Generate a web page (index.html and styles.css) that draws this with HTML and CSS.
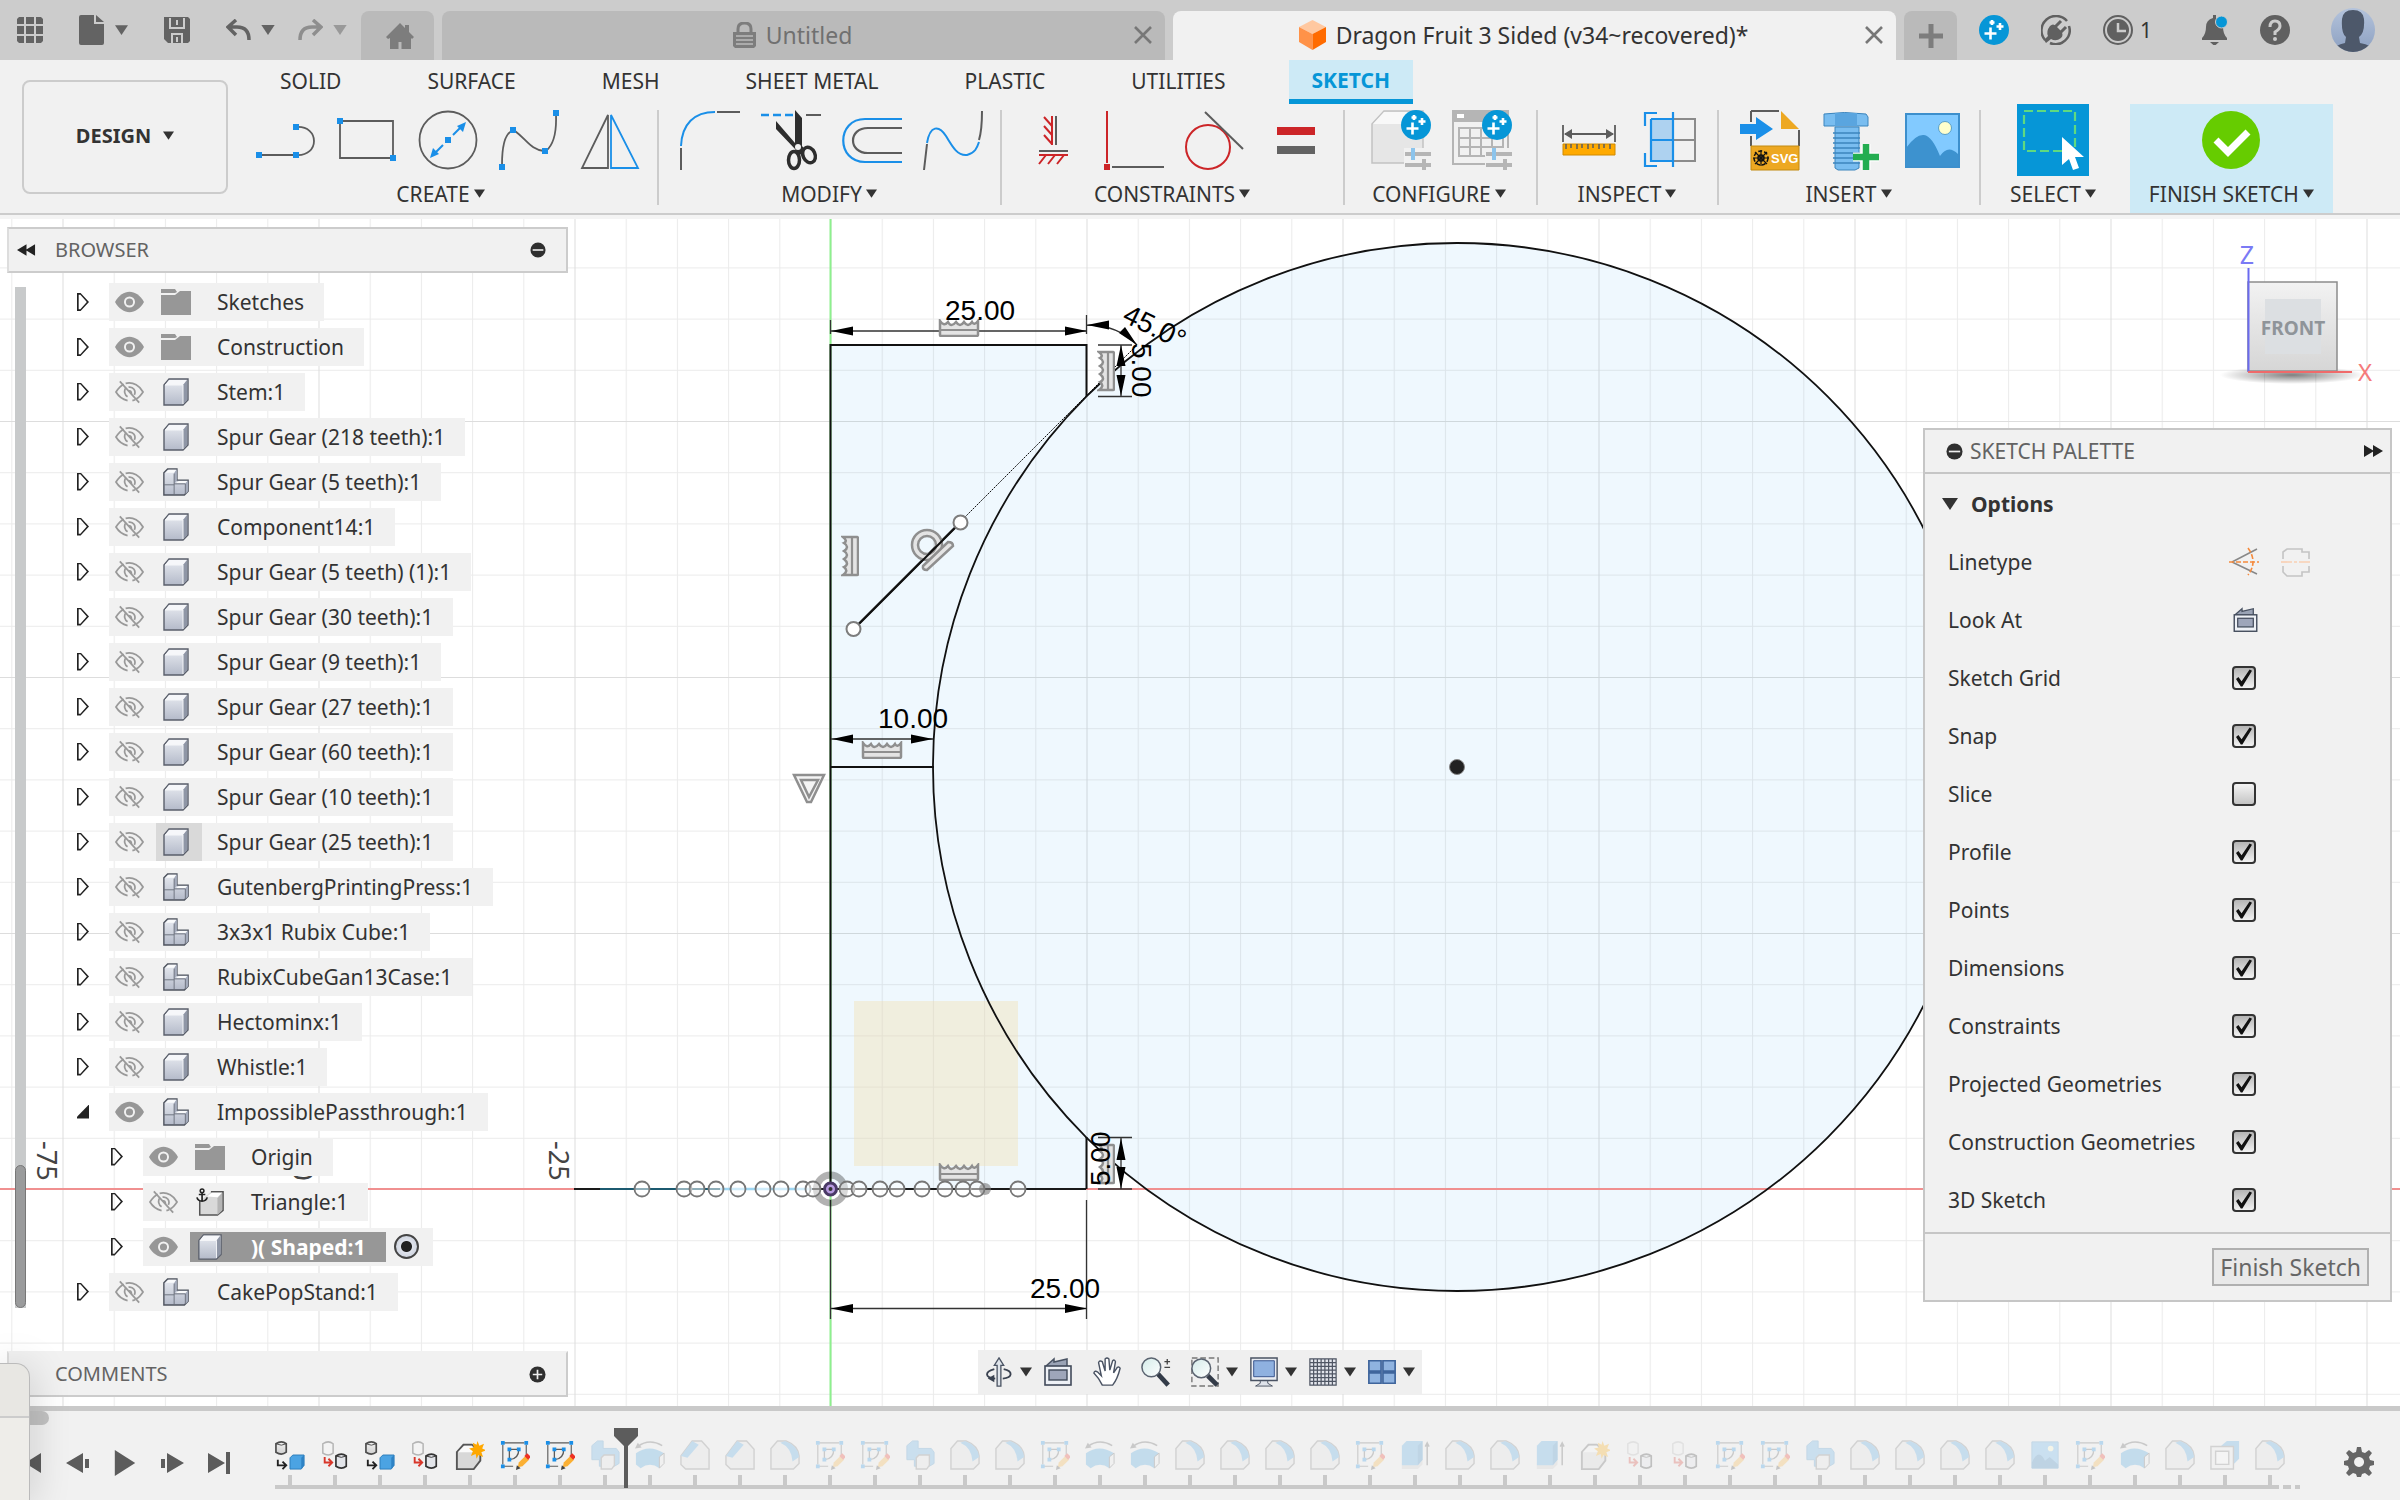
FILE: index.html
```html
<!DOCTYPE html>
<html lang="en">
<head>
<meta charset="utf-8">
<title>Dragon Fruit 3 Sided (v34~recovered)*</title>
<link rel="stylesheet" href="styles.css">
</head>
<body>
<svg class="defs" aria-hidden="true">
  <defs>
    <linearGradient id="g-body" x1="0" y1="0" x2="0" y2="1"><stop offset="0" stop-color="#e9ecf2"/><stop offset="1" stop-color="#b4bac9"/></linearGradient>
    <linearGradient id="g-grey" x1="0" y1="0" x2="0" y2="1"><stop offset="0" stop-color="#f4f4f4"/><stop offset="1" stop-color="#cfcfcf"/></linearGradient>
    <linearGradient id="g-cube" x1="0" y1="0" x2="0" y2="1"><stop offset="0" stop-color="#f2f2f2"/><stop offset="1" stop-color="#d6d6d6"/></linearGradient>
    <linearGradient id="g-lens" x1="0" y1="0" x2="1" y2="1"><stop offset="0" stop-color="#d3ebe9"/><stop offset="1" stop-color="#ffffff"/></linearGradient>
    <linearGradient id="g-face" x1="0" y1="0" x2="0" y2="1"><stop offset="0" stop-color="#b5c4dc"/><stop offset="1" stop-color="#8b9fc0"/></linearGradient>
    <radialGradient id="g-shadow"><stop offset="0" stop-color="#000" stop-opacity=".5"/><stop offset="1" stop-color="#000" stop-opacity="0"/></radialGradient>
  </defs>
  <symbol id="caret" viewBox="0 0 12 9"><path d="M0 0h12L6 9z" fill="currentColor"/></symbol>
  <symbol id="close" viewBox="0 0 18 18"><path d="M1 1l16 16M17 1L1 17" stroke="#777" stroke-width="2.6"/></symbol>
  <symbol id="eye" viewBox="0 0 30 22"><path d="M0 11C8-3 22-3 30 11C22 25 8 25 0 11z" fill="#979797"/><circle cx="15" cy="11" r="4.7" fill="#979797" stroke="#f1f1f1" stroke-width="2"/></symbol>
  <symbol id="eye-off" viewBox="0 0 30 26"><g fill="none" stroke="#999" stroke-width="1.8"><path d="M9 5C5 7 3 10 1 13C4 18 9 21 13 22M11 4C19 2 26 7 29 13C27 16 25 19 22 20M18 22l3-1M11 9C9 12 10 16 13 18M14 8C19 7 22 12 20 16M14 12q3-1 3 3"/><path d="M5 2l20 22"/></g></symbol>
  <symbol id="folder" viewBox="0 0 30 26"><path d="M0 0h14l2 3-2 1H0zM0 6h14l5-4h11v24H0z" fill="#979797"/></symbol>
  <symbol id="body" viewBox="0 0 26 28"><path d="M1 7l5-6h19v21l-5 5H1z" fill="url(#g-body)" stroke="#5a5f6b" stroke-width="1.4"/><path d="M2 7l4-5h18l-4 5z" fill="#f6f7fa"/><path d="M20 7l4-5v20l-4 4z" fill="#8f96a6"/><path d="M2 7h18v19" fill="none" stroke="#f4f5f8" stroke-width="1"/></symbol>
  <symbol id="assembly" viewBox="0 0 28 30"><path d="M1 5l4-4h10v12h12v12l-4 4H1z" fill="url(#g-body)" stroke="#4f545f" stroke-width="1.5"/><path d="M12 5l3-4v12l-3 4zM24 17l3-4v12l-3 3z" fill="#a4abbb"/><path d="M1 18h11M12 6v22M12 17h12v11" fill="none" stroke="#6a707c" stroke-width="1"/><path d="M3 5l3-3h8l-2 3zM14 16l3-2h9l-2 2z" fill="#fafbfc"/></symbol>
  <symbol id="anchored" viewBox="0 0 30 30"><path d="M4 14v15h19l6-5V4H16" fill="#d9d9d9" stroke="#555" stroke-width="1.6"/><path d="M12 9l5-4h11l-5 5z" fill="#fff"/><path d="M23 11l5-6v19l-5 5z" fill="#b5b5b5"/><circle cx="6.500" cy="3" r="2" fill="none" stroke="#222" stroke-width="1.6"/><path d="M6.500 5v9M3 7h7M1 10q1 4 5.500 4Q11 14 12 10" fill="none" stroke="#222" stroke-width="1.8"/></symbol>
  <symbol id="minus" viewBox="0 0 18 18"><circle cx="9" cy="9" r="8.500" fill="#2f2f2f"/><path d="M3 9h12" stroke="#eee" stroke-width="1.8"/></symbol>
  <symbol id="plus" viewBox="0 0 18 18"><circle cx="9" cy="9" r="8.500" fill="#2f2f2f"/><path d="M4 9h10M9 4v10" stroke="#eee" stroke-width="1.800"/></symbol>
  <symbol id="rewind" viewBox="0 0 20 12"><path d="M10 0v12L0 6zM19 0v12L9 6z" fill="#222"/></symbol>
  <symbol id="spark" viewBox="0 0 30 30"><circle cx="15" cy="15" r="15" fill="#0696d7"/><path d="M11.500 12.500v12M5.500 18.500h12M21 8v7M17.500 11.500h7M13 5v5M10.500 7.500h5" stroke="#fff" stroke-width="2.600"/></symbol>
  <symbol id="look" viewBox="0 0 28 30"><path d="M2 9L10 2v3l13-3v8" fill="#9aa3b5" stroke="#4a5363" stroke-width="1.5"/><rect x="1" y="9" width="26" height="19" fill="#eef1f6" stroke="#414a5a" stroke-width="1.6"/><rect x="5" y="13" width="18" height="10" fill="#9ea6ba" stroke="#414a5a" stroke-width="1.4"/></symbol>

  <symbol id="t-insert" viewBox="0 0 32 32"><path d="M1 4q6-4 11 0v9q-5 4-11 0z" fill="url(#g-grey)" stroke="#4d4d4d" stroke-width="1.8"/><path d="M1 4q6 3 11 0" fill="none" stroke="#4d4d4d"/><path d="M3 21v6h8M8 23l4 4-4 4" fill="none" stroke="#222" stroke-width="2"/><path d="M16 19l3-3h12v11l-3 4H16z" fill="#4ba3e3" stroke="#2b7cba"/><path d="M28 19l3-3v11l-3 4z" fill="#2f83c5"/></symbol>
  <symbol id="t-derive" viewBox="0 0 32 32"><path d="M3 4q6-4 11 0v10q-5 4-11 0z" fill="#f3f3f3" stroke="#b5b5b5" stroke-width="1.600"/><path d="M5 18v6h7M9 20l4 4-4 4" fill="none" stroke="#d8372a" stroke-width="2"/><path d="M17 17q6-4 11 0v11q-5 4-11 0z" fill="#e3e5ea" stroke="#333" stroke-width="1.800"/><path d="M17 17q6 3 11 0" fill="none" stroke="#333"/></symbol>
  <symbol id="t-new" viewBox="0 0 32 32"><path d="M2 13l7-8h9l9 9v8l-7 9H2z" fill="#d8d8d8" stroke="#565656" stroke-width="2"/><path d="M3 13l7-7h8l6 7z" fill="#fafafa"/><path d="M24 1l2 5 5-2-2 5 4 2-5 2 2 5-5-2-2 4-1-5-5 2 2-5-4-3 5-1-1-5 4 2z" fill="#ffa800"/></symbol>
  <symbol id="t-sketch" viewBox="0 0 32 32"><path d="M4 3h22M3 5v21M28 5v11M4 28h10" fill="none" stroke="#5b5b5b" stroke-width="1.200"/><path d="M10 10h10q0 10-10 11z" fill="none" stroke="#5b5b5b" stroke-width="1.400"/><path d="M1 1h4v4H1zM26 1h4v4h-4zM1 26h4v4H1zM8 8h4v4H8zM18 8h4v4h-4zM8 19h4v4H8z" fill="#1a8fe8"/><path d="M19 29l1-5 7-7 4 4-7 7z" fill="#fbb034"/><path d="M26 17l3-3 4 4-3 3z" fill="#ee3124"/><path d="M17 32l1-5 4 3z" fill="#444"/></symbol>
  <symbol id="t-combine" viewBox="0 0 32 32"><path d="M2 6l6-5h6v8h14l3 4v12l-5 3H10v-7H2z" fill="#5aaee8" stroke="#3c8cc7"/><path d="M12 19l3-3h11v11l-3 4H12z" fill="#e8e8e8" stroke="#777" stroke-width="1.500"/></symbol>
  <symbol id="t-revolve" viewBox="0 0 32 32"><path d="M3 7Q15-2 29 6" fill="none" stroke="#555" stroke-width="1.600"/><path d="M0 9l3-6 4 5z" fill="#555"/><path d="M1 14q14-10 30 0v10l-5 6q-10-7-20 0l-5-4z" fill="#3f9fe0"/><path d="M26 18l5-4v11l-5 5z" fill="#eee" stroke="#555"/></symbol>
  <symbol id="t-chamfer" viewBox="0 0 32 32"><path d="M1 17L13 1h10l8 9v21H6L1 26z" fill="#e4e4e4" stroke="#777" stroke-width="1.500"/><path d="M1 17L13 1l7 4L8 19z" fill="#4ba3e3"/></symbol>
  <symbol id="t-fillet" viewBox="0 0 32 32"><path d="M1 31V9l7-8h9q13 5 14 16v8l-6 6z" fill="#e4e4e4" stroke="#777" stroke-width="1.500"/><path d="M11 3l5-2q14 5 15 17l-7 5Q23 8 11 3z" fill="#4ba3e3"/></symbol>
  <symbol id="t-extrude" viewBox="0 0 32 32"><path d="M2 25v6h17l5-5v-5z" fill="#ccc"/><path d="M2 6l5-5h17v20l-5 6H2z" fill="#4ba3e3"/><path d="M19 6l5-5v20l-5 6z" fill="#2f83c5"/><path d="M29 27V4M27 7l2-4 2 4" stroke="#555" fill="none" stroke-width="1.600"/></symbol>
  <symbol id="t-image" viewBox="0 0 32 32"><path d="M2 2h28v28H2z" fill="#5bb0f0" stroke="#3c8cc7"/><path d="M2 24q7-16 14-2l5-4 9 8v4H2z" fill="#2b7cba"/><circle cx="22" cy="9" r="3" fill="#ffffd0"/></symbol>
  <symbol id="t-shell" viewBox="0 0 32 32"><path d="M12 6l6-5h13v19l-5 5H12z" fill="#4ba3e3"/><path d="M1 7h24v24H1z" fill="#eee" stroke="#777" stroke-width="1.500"/><path d="M6 12h14v14H6z" fill="#fff" stroke="#777" stroke-width="1.500"/></symbol>

  <symbol id="comb" viewBox="0 0 42 18"><path d="M2 10V2q4 6 8 1q3 6 8 0q4 6 8 0q4 6 8 0q2 4 6-1v14q0 1-2 1H3q-1 0-1-1z" fill="#e4e4e4" stroke="#8f8f8f" stroke-width="2.500"/><path d="M2 11h38" stroke="#8f8f8f" stroke-width="2.200"/></symbol>
</svg>

<header class="topbar">
  <div class="quick">
    <button class="icon-btn" aria-label="Data panel"><svg width="26" height="26" viewBox="0 0 26 26"><path fill="#636363" d="M2 0h5v7H0V2zM9 0h8v7H9zM19 0h5l2 2v5h-7zM0 9h7v8H0zM9 9h8v8H9zM19 9h7v8h-7zM0 19h7v7H2l-2-2zM9 19h8v7H9zM19 19h7v5l-2 2h-5z"/></svg></button>
    <button class="icon-btn" aria-label="File"><svg width="26" height="30" viewBox="0 0 26 30"><path fill="#636363" d="M2 0h13v9h10v19q0 2-2 2H2q-2 0-2-2V2Q0 0 2 0zM17 0l8 7h-8z"/></svg><svg class="c-dark" width="13" height="10"><use href="#caret"/></svg></button>
    <button class="icon-btn" aria-label="Save"><svg width="26" height="26" viewBox="0 0 26 26"><path fill="#636363" d="M0 0h24l2 2v22l-2 2H4l-4-4z"/><path d="M6 1v10h14V1M8 26V17h10v9M13 3v5M13 20v5" fill="none" stroke="#ccc" stroke-width="2"/></svg></button>
    <div class="history">
      <button class="icon-btn" aria-label="Undo"><svg width="25" height="22" viewBox="0 0 25 22"><path d="M10 1L2 8l8 8M2 8h9q12 0 12 13" fill="none" stroke="#636363" stroke-width="3.500"/></svg><svg class="c-dark" width="14" height="10"><use href="#caret"/></svg></button>
      <button class="icon-btn" aria-label="Redo"><svg width="25" height="22" viewBox="0 0 25 22"><path d="M15 1l8 7-8 8M23 8h-9Q2 8 2 21" fill="none" stroke="#8e8e8e" stroke-width="3.500"/></svg><svg class="c-mid" width="14" height="10"><use href="#caret"/></svg></button>
    </div>
  </div>
  <nav class="docs" aria-label="Documents">
    <button class="doc doc-small" aria-label="Home"><svg width="28" height="26" viewBox="0 0 28 26"><path d="M14 0l5 5V2h4v7l5 5-2 2-1-1v11h-8v-9h-6v9H4V15l-2 1-2-2z" fill="#7d7d7d"/><path d="M11.500 26v-8h5v8" fill="none" stroke="#7d7d7d" stroke-width="2"/></svg></button>
    <div class="doc"><button class="doc-title"><svg width="23" height="26" viewBox="0 0 23 26"><path d="M5 10V7q0-6 6.500-6T18 7v3" fill="none" stroke="#7d7d7d" stroke-width="3"/><path d="M0 10h23v14l-2 2H2l-2-2z" fill="#7d7d7d"/><path d="M3 14h17M3 18h17M3 22h17" stroke="#bababa" stroke-width="1.500"/></svg>Untitled</button><button class="close" aria-label="Close Untitled"><svg width="18" height="18"><use href="#close"/></svg></button></div>
    <div class="doc doc-active"><button class="doc-title"><svg width="27" height="30" viewBox="0 0 27 30"><path d="M13.500 0L27 7l-13.500 7L0 7z" fill="#ffc8a0"/><path d="M0 7l13.500 7v16L0 22z" fill="#ff9248"/><path d="M27 7l-13.500 7v16L27 22z" fill="#ff6b00"/></svg>Dragon Fruit 3 Sided (v34~recovered)*</button><button class="close" aria-label="Close Dragon Fruit 3 Sided"><svg width="18" height="18"><use href="#close"/></svg></button></div>
    <button class="doc doc-small" aria-label="New document"><svg width="24" height="24" viewBox="0 0 24 24"><path d="M12 0v24M0 12h24" stroke="#7d7d7d" stroke-width="5"/></svg></button>
  </nav>
  <div class="account">
    <button class="icon-btn" aria-label="What's new"><svg width="30" height="30"><use href="#spark"/></svg></button>
    <button class="icon-btn" aria-label="Extensions"><svg width="30" height="30" viewBox="0 0 30 30"><path d="M4 25A14 14 0 1 1 26 6M28 11A14 14 0 0 1 9 28" fill="none" stroke="#606060" stroke-width="2.500"/><path d="M9 11q3-3 6 0l5 5q3 4 0 7-5 4-10 1l-5 4-2-3 4-4q-2-5 2-10z" fill="#606060"/><path d="M14 12l6-6M19 18l6-6" stroke="#606060" stroke-width="3"/></svg></button>
    <button class="icon-btn jobs" aria-label="Job status"><svg width="30" height="30" viewBox="0 0 30 30"><circle cx="15" cy="15" r="14" fill="none" stroke="#606060" stroke-width="2"/><circle cx="15" cy="15" r="11" fill="#606060"/><path d="M15 8v8h8" fill="none" stroke="#ccc" stroke-width="2.500"/></svg>1</button>
    <button class="icon-btn bell" aria-label="Notifications"><svg width="27" height="30" viewBox="0 0 27 30"><path d="M12 0h3v3q7 2 7 9 0 7 4 11v2H1v-2q4-4 4-11 0-7 7-9zM9 27h9l-4.500 4z" fill="#606060"/><circle cx="20.500" cy="7" r="6" fill="#0696d7" stroke="#ccc"/></svg></button>
    <button class="icon-btn" aria-label="Help"><svg width="30" height="30" viewBox="0 0 30 30"><circle cx="15" cy="15" r="15" fill="#606060"/><path d="M10 12q0-6 5-6t5 5q0 3-5 6v3" fill="none" stroke="#ccc" stroke-width="3"/><circle cx="15" cy="24" r="2" fill="#ccc"/></svg></button>
    <button class="icon-btn avatar" aria-label="Account"><svg width="46" height="46" viewBox="0 0 46 46"><clipPath id="face"><circle cx="23" cy="23" r="22"/></clipPath><g clip-path="url(#face)"><path d="M0 0h46v46H0z" fill="url(#g-face)"/><path d="M12 12q1-9 11-9t11 9q1 14-5 18l1 6q12 2 14 8l-4 6H6l-4-6q3-6 13-8l1-6q-5-4-4-18z" fill="#4d586a"/></g></svg></button>
  </div>
</header>

<section class="ribbon">
  <button class="workspace">DESIGN <svg width="11" height="9"><use href="#caret"/></svg></button>
  <div class="ribbon-main">
    <nav class="modes" aria-label="Toolbar tabs">
      <button>SOLID</button><button>SURFACE</button><button>MESH</button><button>SHEET METAL</button><button>PLASTIC</button><button>UTILITIES</button><button class="current">SKETCH</button>
    </nav>
    <div class="groups">
      <div class="group first">
        <div class="tools">
          <button aria-label="Line"><svg viewBox="0 0 60 60"><path d="M3 45h37M40 17C64 15 64 47 40 45" fill="none" stroke="#5c5c5c" stroke-width="1.8"/><path d="M0 42h6v6H0zM37 42h6v6h-6zM37 14h6v6h-6z" fill="#1a8fe8"/></svg></button>
          <button aria-label="Rectangle"><svg viewBox="0 0 60 60"><path d="M3 11h53v37H3z" fill="none" stroke="#5c5c5c" stroke-width="1.8"/><path d="M0 8h6v6H0zM53 45h6v6h-6z" fill="#1a8fe8"/></svg></button>
          <button aria-label="Circle"><svg viewBox="0 0 60 60"><circle cx="30" cy="30" r="28.500" fill="none" stroke="#5c5c5c" stroke-width="1.800"/><path d="M17 43l8-8M35 25l8-8" stroke="#1a8fe8" stroke-width="2"/><path d="M48 12l-3 10-6-6zM12 48l3-10 6 6zM27 27h6v6h-6z" fill="#1a8fe8"/></svg></button>
          <button aria-label="Spline"><svg viewBox="0 0 60 60"><path d="M3 55Q3 25 13 21M16 21C28 30 32 40 45 41M47 41Q58 32 57 5" fill="none" stroke="#5c5c5c" stroke-width="1.800"/><path d="M0 54h6v6H0zM11 17h6v6h-6zM43 38h6v6h-6zM54 0h6v6h-6z" fill="#1a8fe8"/></svg></button>
          <button aria-label="Mirror"><svg viewBox="0 0 60 60"><path d="M28 5v53H2z" fill="none" stroke="#5c5c5c" stroke-width="1.800"/><path d="M31 5v53h27z" fill="none" stroke="#1a8fe8" stroke-width="1.800"/></svg></button>
        </div>
        <button class="label">CREATE<svg width="11" height="9"><use href="#caret"/></svg></button>
      </div>
      <div class="group">
        <div class="tools">
          <button aria-label="Fillet"><svg viewBox="0 0 60 60"><path d="M1 36C2 14 14 2 35 2" fill="none" stroke="#1a8fe8" stroke-width="2"/><path d="M1 38v22M37 2h23" stroke="#5c5c5c" stroke-width="2"/></svg></button>
          <button aria-label="Trim"><svg viewBox="0 0 60 60"><path d="M0 5h32" stroke="#1a8fe8" stroke-width="2.500" stroke-dasharray="8 4"/><path d="M45 5h15" stroke="#5c5c5c" stroke-width="2"/><path d="M34 0l7 8v28l5 6-8 3-4-6-19-20v-8l19 22z" fill="#2d2d2d"/><ellipse cx="33" cy="50" rx="5.500" ry="8.500" fill="#f1f1f1" stroke="#2d2d2d" stroke-width="3.500"/><ellipse cx="48" cy="45" rx="6" ry="8" transform="rotate(-25 48 45)" fill="#f1f1f1" stroke="#2d2d2d" stroke-width="3.500"/><circle cx="37" cy="37" r="3" fill="#f1f1f1"/></svg></button>
          <button aria-label="Offset"><svg viewBox="0 0 60 60"><path d="M60 9H23C-6 9-6 52 23 52H60" fill="none" stroke="#1a8fe8" stroke-width="2.200"/><path d="M60 18H26C6 18 6 43 26 43H60" fill="none" stroke="#5c5c5c" stroke-width="2.200"/></svg></button>
          <button aria-label="Curve"><svg viewBox="0 0 60 60"><path d="M1 60l3-26M56 30q3-10 3-29" fill="none" stroke="#5c5c5c" stroke-width="2"/><path d="M4 33C7 15 16 15 23 26C30 38 35 46 44 45C52 43 54 38 56 32" fill="none" stroke="#1a8fe8" stroke-width="2"/></svg></button>
        </div>
        <button class="label">MODIFY<svg width="11" height="9"><use href="#caret"/></svg></button>
      </div>
      <div class="group">
        <div class="tools">
          <button aria-label="Horizontal/Vertical"><svg viewBox="0 0 60 60"><path d="M29 6v29M21 7l8 9M21 16l8 9M21 25l8 9M16 45h29M23 45l-7 9M32 45l-7 9M41 45l-7 9" fill="none" stroke="#cc2528" stroke-width="2"/><path d="M33 6v29M16 41h29" stroke="#5c5c5c" stroke-width="2"/></svg></button>
          <button aria-label="Perpendicular"><svg viewBox="0 0 60 60"><path d="M3 1v52" stroke="#cc2528" stroke-width="2"/><path d="M0 54h6v6H0z" fill="#cc2528"/><path d="M8 57h52" stroke="#5c5c5c" stroke-width="2"/></svg></button>
          <button aria-label="Tangent"><svg viewBox="0 0 60 60"><circle cx="23" cy="37" r="22" fill="none" stroke="#cc2528" stroke-width="2"/><path d="M20 2l38 37" stroke="#5c5c5c" stroke-width="2"/></svg></button>
          <button aria-label="Equal"><svg viewBox="0 0 60 60"><path d="M11 17h38v8H11z" fill="#cc2528"/><path d="M11 36h38v8H11z" fill="#636363"/></svg></button>
        </div>
        <button class="label">CONSTRAINTS<svg width="11" height="9"><use href="#caret"/></svg></button>
      </div>
      <div class="group wide">
        <div class="tools">
          <button aria-label="Configure model"><svg viewBox="0 0 60 60"><path d="M1 14L13 1h39v40l-12 12H1z" fill="#e6e6e6" stroke="#c2c2c2" stroke-width="1.500"/><path d="M2 14L13 2h38L40 14z" fill="#f8f8f8"/><path d="M33 38h28v22H33z" fill="#f1f1f1"/><path d="M34 44h26M34 55h26M53 49v11" stroke="#b5b5b5" stroke-width="4"/><path d="M42 38v12" stroke="#8cc4ec" stroke-width="4"/><use href="#spark" x="30" y="0" width="30" height="30"/></svg></button>
          <button aria-label="Configuration table"><svg viewBox="0 0 60 60"><path d="M1 1h55v53H1z" fill="#f1f1f1" stroke="#b5b5b5" stroke-width="2"/><path d="M1 1h55v11H1z" fill="#b5b5b5"/><path d="M5 4h7v4H5z" fill="#fff"/><path d="M7 18h44v28H7zM7 28h44M7 37h44M18 18v28M29 18v28M40 18v28" fill="none" stroke="#b5b5b5" stroke-width="2"/><path d="M33 38h28v22H33z" fill="#f1f1f1"/><path d="M34 44h26M34 55h26M53 49v11" stroke="#b5b5b5" stroke-width="4"/><path d="M42 38v12" stroke="#8cc4ec" stroke-width="4"/><use href="#spark" x="30" y="0" width="30" height="30"/></svg></button>
        </div>
        <button class="label">CONFIGURE<svg width="11" height="9"><use href="#caret"/></svg></button>
      </div>
      <div class="group">
        <div class="tools">
          <button aria-label="Measure"><svg viewBox="0 0 60 60"><path d="M4 34h52v11H4z" fill="#ffaa00" stroke="#d08a00"/><path d="M7 34v5M12 34v4M18 34v5M23 34v4M29 34v5M34 34v4M40 34v5M45 34v4M51 34v5" stroke="#5c5c5c" stroke-width="1.500"/><path d="M4 15v17M56 15v17M6 24h48" stroke="#5c5c5c" stroke-width="1.800"/><path d="M5 24l8-5v10zM55 24l-8-5v10z" fill="#5c5c5c"/></svg></button>
          <button aria-label="Section"><svg viewBox="0 0 60 60"><path d="M33 9h22v42H33M33 30h22" fill="none" stroke="#8b8b8b" stroke-width="2"/><path d="M11 9h22v42H11z" fill="#aed2f0"/><path d="M11 9h22M11 9v42h22M11 30h22M33 2v55M5 16V3h12M5 43v13h12" fill="none" stroke="#1a8fe8" stroke-width="2.200"/></svg></button>
        </div>
        <button class="label">INSPECT<svg width="11" height="9"><use href="#caret"/></svg></button>
      </div>
      <div class="group">
        <div class="tools">
          <button aria-label="Insert SVG"><svg viewBox="0 0 60 60"><path d="M11 1h28M11 1v11M11 26v10M59 20v16" stroke="#5c5c5c" stroke-width="2"/><path d="M41 1l18 18H41z" fill="#eda822"/><path d="M0 14h16V7l17 12-17 11v-6H0z" fill="#1a8fe8"/><path d="M11 36h48v24H11z" fill="#eda822" stroke="#c28a10"/><g fill="none" stroke="#111" stroke-width="1.500"><circle cx="21" cy="48" r="3"/><path d="M21 40v16M13 48h16M15 42l12 12M27 42L15 54" stroke-width="1.200"/><circle cx="21" cy="48" r="7" stroke-dasharray="4 2"/></g><text x="31" y="53" class="svg-badge">SVG</text></svg></button>
          <button aria-label="Insert fastener"><svg viewBox="0 0 60 60"><path d="M14 17h24v41l-4 2H17l-3-2z" fill="#79bdf0" stroke="#3c85bd"/><path d="M12 23h27M12 28h27M12 33h27M12 38h27M12 43h27M12 48h27M12 53h27" stroke="#3c85bd" stroke-width="1.500"/><path d="M3 4q20-3 42 0l2 3v9H3z" fill="#79bdf0" stroke="#3c85bd"/><path d="M14 3h22v13H14z" fill="#5aa5df"/><path d="M45 34v26M32 47h26" stroke="#fff" stroke-width="9"/><path d="M45 34v26M32 47h26" stroke="#23ad50" stroke-width="6.500"/></svg></button>
          <button aria-label="Insert image"><svg viewBox="0 0 60 60"><path d="M4 4h53v53H4z" fill="#82caff" stroke="#3d8fcc" stroke-width="2"/><path d="M4 38Q14 24 22 25T38 46Q46 34 56 44V56H4z" fill="#3d92cf"/><circle cx="43" cy="18" r="6.500" fill="#ffffcc" stroke="#5aa0c8"/></svg></button>
        </div>
        <button class="label">INSERT<svg width="11" height="9"><use href="#caret"/></svg></button>
      </div>
      <div class="group select">
        <div class="tools">
          <button class="picked" aria-label="Select"><svg viewBox="0 0 72 72"><path d="M0 0h72v72H0z" fill="#0696d7"/><path d="M7 7h51v40H7z" fill="none" stroke="#5fd980" stroke-width="2.200" stroke-dasharray="9 4"/><path d="M45 33v28l7-6 4 11 6-2-4-11h9z" fill="#fff"/></svg></button>
        </div>
        <button class="label">SELECT<svg width="11" height="9"><use href="#caret"/></svg></button>
      </div>
      <div class="group finish">
        <div class="tools">
          <button aria-label="Finish sketch"><svg viewBox="0 0 60 60"><circle cx="30" cy="30" r="29" fill="#66cc00"/><path d="M15 30l12 12 20-20" fill="none" stroke="#fff" stroke-width="7"/></svg></button>
        </div>
        <button class="label">FINISH SKETCH<svg width="11" height="9"><use href="#caret"/></svg></button>
      </div>
    </div>
  </div>
</section>

<main class="stage">
  <svg class="sketch" viewBox="0 215 2400 1191" preserveAspectRatio="xMidYMid slice" role="img" aria-label="Sketch canvas">
    <defs>
      <pattern id="minor" x="830.500" y="1189" width="51.200" height="51.200" patternUnits="userSpaceOnUse"><path d="M0 0H51.200M0 0V51.200" stroke="#000" stroke-opacity=".08" stroke-width="2"/></pattern>
      <pattern id="major" x="830.500" y="1189" width="256" height="256" patternUnits="userSpaceOnUse"><path d="M0 0H256M0 0V256" stroke="#000" stroke-opacity=".06" stroke-width="2"/></pattern>
    </defs>
    <path d="M0 215h2400v1191H0z" fill="#fff"/>
    <path d="M830 345h256.500v844H830z" fill="#eff8fe"/>
    <circle cx="1457" cy="767" r="524" fill="#eff8fe"/>
    <path d="M0 215h2400v1191H0z" fill="url(#minor)"/>
    <path d="M0 215h2400v1191H0z" fill="url(#major)"/>
    <path d="M854 1001h164v165H854z" fill="#f2deae" fill-opacity=".4"/>
    <path d="M0 1189h2400" stroke="#f09090" stroke-width="2"/>
    <path d="M830.500 215v1191" stroke="#8df08d" stroke-width="2"/>
    <g class="ruler">
      <text transform="translate(37 1141) rotate(90)">-75</text>
      <text transform="translate(293 1141) rotate(90)">-50</text>
      <text transform="translate(549 1141) rotate(90)">-25</text>
    </g>
    <path d="M574 1189h512" stroke="#1a1a1a" stroke-width="2"/>
    <path d="M600 1189h120" stroke="#1c5a70" stroke-width="2"/>
    <path d="M720 1189h92" stroke="#9ed6f2" stroke-width="2.500"/>
    <g fill="none" stroke="#111" stroke-width="2">
      <circle cx="1457" cy="767" r="524" stroke-width="1.800"/>
      <path d="M1086.500 396V345H830.500v844M830 767h104M1086.500 1137v52M853.500 629L960.500 522"/>
      <path d="M960 522l176-176" stroke-width="1" stroke-dasharray="2 1"/>
    </g>
    <g fill="none" stroke="#333" stroke-width="1.300">
      <path d="M831 331h256M830.500 320v14M1086.500 315v19M831 739h102M831 1308.500h256M830.500 1200v119M1086.500 1200v119M1098 345h34M1098 396.500h34M1121 345v51M1098 1137.500h34M1098 1189h34M1121 1137v52M1087 325Q1118 325 1137 345"/>
    </g>
    <g fill="#000">
      <path d="M831 331l22-4.500v9zM1087 331l-22-4.500v9zM832 739l21-4.500v9zM933 739l-22-4.500v9zM831 1308.500l22-4.500v9zM1087 1308.500l-22-4.500v9z"/>
      <path d="M1121 345l-4.500 21h9zM1121 396l-4.500-21h9zM1121 1138l-4.500 22h9zM1121 1189l-4.500-22h9zM1087 325l22-4.500v9zM1137 345l-18-12 6-6z"/>
    </g>
    <use href="#comb" x="938" y="319" width="42" height="18"/>
    <use href="#comb" x="861" y="741" width="42" height="18"/>
    <use href="#comb" x="938" y="1163" width="42" height="18"/>
    <use href="#comb" width="42" height="18" transform="translate(841 577) rotate(-90)"/>
    <use href="#comb" width="42" height="18" transform="translate(1097 392) rotate(-90)"/>
    <use href="#comb" width="42" height="18" transform="translate(1097 1185) rotate(-90)"/>
    <g fill="none" stroke="#8f8f8f" stroke-width="2.500">
      <path d="M912 545a15 15 0 1 1 30 0a15 15 0 1 1-30 0M918 545a9 9 0 1 0 18 0a9 9 0 1 0-18 0" fill="#e4e4e4" fill-rule="evenodd"/>
      <path d="M923 566l25-24q5 0 5 4l-26 24q-5 0-4-4z" fill="#e4e4e4"/>
      <path d="M794 775h30l-13 27h-4z" fill="#f4f4f4"/><path d="M801 780h17l-9 17z"/>
    </g>
    <path d="M855 628l105-105" stroke="#111" stroke-width="2"/>
    <g class="dims">
      <text x="945" y="320">25.00</text>
      <text x="878" y="728">10.00</text>
      <text x="1030" y="1298">25.00</text>
      <text transform="translate(1132 343) rotate(90)">5.00</text>
      <text transform="translate(1110 1186) rotate(-90)">5.00</text>
      <text transform="translate(1121 321) rotate(26)">45.0°</text>
    </g>
    <g fill="#fff" stroke="#7d7d7d" stroke-width="2"><circle cx="853.500" cy="629" r="7"/><circle cx="960.500" cy="522.500" r="7"/></g>
    <circle cx="830.500" cy="1189" r="14" fill="none" stroke="#000" stroke-opacity=".3" stroke-width="7"/>
    <g fill="#fff" fill-opacity=".5" stroke="#777" stroke-width="1.800">
      <circle cx="642" cy="1189" r="7.500"/><circle cx="684" cy="1189" r="7.500"/><circle cx="697" cy="1189" r="7.500"/><circle cx="716" cy="1189" r="7.500"/><circle cx="738" cy="1189" r="7.500"/><circle cx="763" cy="1189" r="7.500"/><circle cx="781" cy="1189" r="7.500"/><circle cx="803" cy="1189" r="7.500"/><circle cx="813" cy="1189" r="7.500"/><circle cx="847" cy="1189" r="7.500"/><circle cx="859" cy="1189" r="7.500"/><circle cx="880" cy="1189" r="7.500"/><circle cx="897" cy="1189" r="7.500"/><circle cx="922" cy="1189" r="7.500"/><circle cx="945" cy="1189" r="7.500"/><circle cx="963" cy="1189" r="7.500"/><circle cx="977" cy="1189" r="7.500"/><circle cx="1018" cy="1189" r="7.500"/>
    </g>
    <circle cx="985" cy="1189" r="6" fill="#777" fill-opacity=".6"/>
    <circle cx="830.500" cy="1189" r="6" fill="#b79be0" stroke="#4a3a66" stroke-width="3"/><circle cx="830.500" cy="1189" r="2" fill="#333"/>
    <circle cx="1457" cy="767" r="7.500" fill="#222" stroke="#888"/>
  </svg>

  <aside class="left">
    <section class="browser">
      <header class="panel-head"><button class="icon-btn" aria-label="Collapse browser"><svg width="19" height="12"><use href="#rewind"/></svg></button><h2>BROWSER</h2><button class="icon-btn" aria-label="Hide browser"><svg width="16" height="16"><use href="#minus"/></svg></button></header>
      <div class="tree-wrap">
        <div class="scroll"><div class="thumb"></div></div>
        <ul class="tree">
          <li><button class="twist" aria-label="Expand"></button><div class="node"><svg class="eye"><use href="#eye"/></svg><svg class="kind"><use href="#folder"/></svg><span>Sketches</span></div></li>
          <li><button class="twist" aria-label="Expand"></button><div class="node"><svg class="eye"><use href="#eye"/></svg><svg class="kind"><use href="#folder"/></svg><span>Construction</span></div></li>
          <li><button class="twist" aria-label="Expand"></button><div class="node"><svg class="eye"><use href="#eye-off"/></svg><svg class="kind"><use href="#body"/></svg><span>Stem:1</span></div></li>
          <li><button class="twist" aria-label="Expand"></button><div class="node"><svg class="eye"><use href="#eye-off"/></svg><svg class="kind"><use href="#body"/></svg><span>Spur Gear (218 teeth):1</span></div></li>
          <li><button class="twist" aria-label="Expand"></button><div class="node"><svg class="eye"><use href="#eye-off"/></svg><svg class="kind"><use href="#assembly"/></svg><span>Spur Gear (5 teeth):1</span></div></li>
          <li><button class="twist" aria-label="Expand"></button><div class="node"><svg class="eye"><use href="#eye-off"/></svg><svg class="kind"><use href="#body"/></svg><span>Component14:1</span></div></li>
          <li><button class="twist" aria-label="Expand"></button><div class="node"><svg class="eye"><use href="#eye-off"/></svg><svg class="kind"><use href="#body"/></svg><span>Spur Gear (5 teeth) (1):1</span></div></li>
          <li><button class="twist" aria-label="Expand"></button><div class="node"><svg class="eye"><use href="#eye-off"/></svg><svg class="kind"><use href="#body"/></svg><span>Spur Gear (30 teeth):1</span></div></li>
          <li><button class="twist" aria-label="Expand"></button><div class="node"><svg class="eye"><use href="#eye-off"/></svg><svg class="kind"><use href="#body"/></svg><span>Spur Gear (9 teeth):1</span></div></li>
          <li><button class="twist" aria-label="Expand"></button><div class="node"><svg class="eye"><use href="#eye-off"/></svg><svg class="kind"><use href="#body"/></svg><span>Spur Gear (27 teeth):1</span></div></li>
          <li><button class="twist" aria-label="Expand"></button><div class="node"><svg class="eye"><use href="#eye-off"/></svg><svg class="kind"><use href="#body"/></svg><span>Spur Gear (60 teeth):1</span></div></li>
          <li><button class="twist" aria-label="Expand"></button><div class="node"><svg class="eye"><use href="#eye-off"/></svg><svg class="kind"><use href="#body"/></svg><span>Spur Gear (10 teeth):1</span></div></li>
          <li><button class="twist" aria-label="Expand"></button><div class="node"><svg class="eye"><use href="#eye-off"/></svg><svg class="kind hot"><use href="#body"/></svg><span>Spur Gear (25 teeth):1</span></div></li>
          <li><button class="twist" aria-label="Expand"></button><div class="node"><svg class="eye"><use href="#eye-off"/></svg><svg class="kind"><use href="#assembly"/></svg><span>GutenbergPrintingPress:1</span></div></li>
          <li><button class="twist" aria-label="Expand"></button><div class="node"><svg class="eye"><use href="#eye-off"/></svg><svg class="kind"><use href="#assembly"/></svg><span>3x3x1 Rubix Cube:1</span></div></li>
          <li><button class="twist" aria-label="Expand"></button><div class="node"><svg class="eye"><use href="#eye-off"/></svg><svg class="kind"><use href="#assembly"/></svg><span>RubixCubeGan13Case:1</span></div></li>
          <li><button class="twist" aria-label="Expand"></button><div class="node"><svg class="eye"><use href="#eye-off"/></svg><svg class="kind"><use href="#body"/></svg><span>Hectominx:1</span></div></li>
          <li><button class="twist" aria-label="Expand"></button><div class="node"><svg class="eye"><use href="#eye-off"/></svg><svg class="kind"><use href="#body"/></svg><span>Whistle:1</span></div></li>
          <li><button class="twist open" aria-label="Collapse"></button><div class="node"><svg class="eye"><use href="#eye"/></svg><svg class="kind"><use href="#assembly"/></svg><span>ImpossiblePassthrough:1</span></div></li>
          <li class="child"><button class="twist" aria-label="Expand"></button><div class="node"><svg class="eye"><use href="#eye"/></svg><svg class="kind"><use href="#folder"/></svg><span>Origin</span></div></li>
          <li class="child"><button class="twist" aria-label="Expand"></button><div class="node"><svg class="eye"><use href="#eye-off"/></svg><svg class="kind"><use href="#anchored"/></svg><span>Triangle:1</span></div></li>
          <li class="child"><button class="twist" aria-label="Expand"></button><div class="node"><svg class="eye"><use href="#eye"/></svg><label class="active-part" for="active"><svg class="kind"><use href="#body"/></svg><span>)( Shaped:1</span></label><input type="radio" id="active" name="active" checked></div></li>
          <li><button class="twist" aria-label="Expand"></button><div class="node"><svg class="eye"><use href="#eye-off"/></svg><svg class="kind"><use href="#assembly"/></svg><span>CakePopStand:1</span></div></li>
        </ul>
      </div>
    </section>
    <header class="panel-head comments"><h2>COMMENTS</h2><button class="icon-btn" aria-label="Add comment"><svg width="17" height="17"><use href="#plus"/></svg></button></header>
  </aside>

  <div class="navbar">
    <button aria-label="Orbit"><svg viewBox="0 0 32 32"><path d="M16 1l5 8h-3v22h-4V9h-3z" fill="#dfe4ea" stroke="#4a5363" stroke-width="1.400"/><path d="M11 13C0 16 1 22 12 23M20 23C31 22 31 15 21 13" fill="none" stroke="#3a4250" stroke-width="2"/><path d="M4 23l7-4v8z" fill="#3a4250"/></svg><svg class="dd"><use href="#caret"/></svg></button>
    <button aria-label="Look at"><svg viewBox="0 0 28 30"><use href="#look"/></svg></button>
    <button aria-label="Pan"><svg viewBox="0 0 32 32"><path d="M11 30Q8 23 2 17q1-3 4-1l4 4L7 6q1-3 4-1l3 10V2q2-2 4 0l1 12 3-10q2-2 3 1l-2 12 4-6q2-1 3 1-3 12-8 18z" fill="#fff" stroke="#4a5363" stroke-width="1.500"/></svg></button>
    <button aria-label="Zoom"><svg viewBox="0 0 32 32"><path d="M18 18l11 12" stroke="#333b48" stroke-width="5"/><circle cx="11" cy="11" r="10" fill="url(#g-lens)" stroke="#5a6370" stroke-width="1.600"/><path d="M28 2v6M25 5h6M25 11h6" stroke="#444" stroke-width="1.400"/></svg></button>
    <button aria-label="Zoom window"><svg viewBox="0 0 32 32"><path d="M2 1h28v30H2z" fill="none" stroke="#777" stroke-width="1.500" stroke-dasharray="6 3"/><path d="M19 20l10 10" stroke="#333b48" stroke-width="5"/><circle cx="12" cy="12" r="10" fill="url(#g-lens)" stroke="#5a6370" stroke-width="1.600"/></svg><svg class="dd"><use href="#caret"/></svg></button>
    <button aria-label="Display settings"><svg viewBox="0 0 32 32"><path d="M12 25h8v3l5 3H7l5-3z" fill="#dfe3ea" stroke="#4a5363"/><path d="M2 1h28v24H2z" fill="#e9ecf2" stroke="#4a5363" stroke-width="1.500"/><path d="M5 4h22v17H5z" fill="#8fb1e0" stroke="#33508a"/></svg><svg class="dd"><use href="#caret"/></svg></button>
    <button aria-label="Grid and snaps"><svg viewBox="0 0 32 32"><path d="M2 2h28v28H2z" fill="#e2e5ec"/><path d="M2 2h28v28H2zM6 2v28M10 2v28M14 2v28M18 2v28M22 2v28M26 2v28M2 6h28M2 10h28M2 14h28M2 18h28M2 22h28M2 26h28" fill="none" stroke="#4f5664" stroke-width="1.300"/></svg><svg class="dd"><use href="#caret"/></svg></button>
    <button aria-label="Viewports"><svg viewBox="0 0 32 32"><path d="M2 4h13v11H2zM17 4h13v11H17zM2 17h13v11H2zM17 17h13v11H17z" fill="#8fb3e0" stroke="#3f659c" stroke-width="1.800"/></svg><svg class="dd"><use href="#caret"/></svg></button>
  </div>

  <aside class="right">
    <svg class="cube" viewBox="0 0 172 183" role="img" aria-label="View cube">
      <ellipse cx="72" cy="145" rx="72" ry="9" fill="url(#g-shadow)"/>
      <path d="M28 52h89v89H28z" fill="url(#g-cube)" stroke="#8c8c8c" stroke-width="1.500"/>
      <path d="M45 69h56v55H45z" fill="#dcdfe2"/>
      <text x="73" y="105" class="cube-face">FRONT</text>
      <path d="M28.500 38v104" stroke="#6a6af0" stroke-width="2"/><path d="M28 142h104" stroke="#f06a6a" stroke-width="2"/>
      <text x="27" y="34" class="cube-z">Z</text><text x="145" y="151" class="cube-x">X</text>
    </svg>
    <form class="palette">
      <header class="palette-head"><button type="button" class="icon-btn" aria-label="Minimise palette"><svg width="17" height="17"><use href="#minus"/></svg></button><h2>SKETCH PALETTE</h2><button type="button" class="icon-btn flip" aria-label="Dock palette"><svg width="20" height="12"><use href="#rewind"/></svg></button></header>
      <div class="palette-body">
        <h3><svg width="16" height="12"><use href="#caret"/></svg>Options</h3>
        <div class="opt"><span>Linetype</span><div class="opt-icons"><button type="button" class="icon-btn" aria-label="Construction"><svg width="30" height="30" viewBox="0 0 30 30"><path d="M3 15L28 2M3 15l25 12" stroke="#888" stroke-width="1.500"/><path d="M0 15h30M19 1q10 14 0 27" fill="none" stroke="#f58a3c" stroke-width="1.600" stroke-dasharray="5 2"/></svg></button><button type="button" class="icon-btn" aria-label="Centerline"><svg width="30" height="30" viewBox="0 0 30 30"><path d="M2 12V5l4-3h15v3h7v7M2 19v6l4 4h15v-4h7v-6" fill="none" stroke="#c4c4c4" stroke-width="1.600"/><path d="M0 15h30" stroke="#f9cfb2" stroke-width="1.600" stroke-dasharray="11 2 3 2"/></svg></button></div></div>
        <div class="opt"><span>Look At</span><button type="button" class="icon-btn" aria-label="Look At"><svg width="27" height="26"><use href="#look"/></svg></button></div>
        <div class="opt"><label for="o1">Sketch Grid</label><input type="checkbox" id="o1" checked></div>
        <div class="opt"><label for="o2">Snap</label><input type="checkbox" id="o2" checked></div>
        <div class="opt"><label for="o3">Slice</label><input type="checkbox" id="o3"></div>
        <div class="opt"><label for="o4">Profile</label><input type="checkbox" id="o4" checked></div>
        <div class="opt"><label for="o5">Points</label><input type="checkbox" id="o5" checked></div>
        <div class="opt"><label for="o6">Dimensions</label><input type="checkbox" id="o6" checked></div>
        <div class="opt"><label for="o7">Constraints</label><input type="checkbox" id="o7" checked></div>
        <div class="opt"><label for="o8">Projected Geometries</label><input type="checkbox" id="o8" checked></div>
        <div class="opt"><label for="o9">Construction Geometries</label><input type="checkbox" id="o9" checked></div>
        <div class="opt"><label for="o10">3D Sketch</label><input type="checkbox" id="o10" checked></div>
      </div>
      <footer class="palette-foot"><button type="button" class="finish-btn">Finish Sketch</button></footer>
    </form>
  </aside>
</main>

<footer class="timeline">
  <div class="behind"></div>
  <div class="play">
    <button aria-label="Go to start"><svg viewBox="0 0 24 24"><path d="M2 1h3v22H2zM22 2v20L6 12z"/></svg></button>
    <button aria-label="Step back"><svg viewBox="0 0 24 24"><path d="M17 2v20L0 12zM19 8h4v9h-4z"/></svg></button>
    <button aria-label="Play"><svg viewBox="0 0 24 28"><path d="M1 0v28l22-14z"/></svg></button>
    <button aria-label="Step forward"><svg viewBox="0 0 24 24"><path d="M7 2v20l17-10zM1 8h4v9H1z"/></svg></button>
    <button aria-label="Go to end"><svg viewBox="0 0 24 24"><path d="M1 2v20l17-10zM19 1h4v22h-4z"/></svg></button>
  </div>
  <div class="track">
    <ol>
      <li><svg><use href="#t-insert"/></svg></li><li><svg><use href="#t-derive"/></svg></li><li><svg><use href="#t-insert"/></svg></li><li><svg><use href="#t-derive"/></svg></li><li><svg><use href="#t-new"/></svg></li><li><svg><use href="#t-sketch"/></svg></li><li><svg><use href="#t-sketch"/></svg></li>
      <li class="off"><svg><use href="#t-combine"/></svg></li><li class="off mark"><svg><use href="#t-revolve"/></svg></li><li class="off"><svg><use href="#t-chamfer"/></svg></li><li class="off"><svg><use href="#t-chamfer"/></svg></li><li class="off"><svg><use href="#t-fillet"/></svg></li><li class="off"><svg><use href="#t-sketch"/></svg></li><li class="off"><svg><use href="#t-sketch"/></svg></li><li class="off"><svg><use href="#t-combine"/></svg></li><li class="off"><svg><use href="#t-fillet"/></svg></li><li class="off"><svg><use href="#t-fillet"/></svg></li><li class="off"><svg><use href="#t-sketch"/></svg></li><li class="off"><svg><use href="#t-revolve"/></svg></li><li class="off"><svg><use href="#t-revolve"/></svg></li>
      <li class="off"><svg><use href="#t-fillet"/></svg></li><li class="off"><svg><use href="#t-fillet"/></svg></li><li class="off"><svg><use href="#t-fillet"/></svg></li><li class="off"><svg><use href="#t-fillet"/></svg></li><li class="off"><svg><use href="#t-sketch"/></svg></li><li class="off"><svg><use href="#t-extrude"/></svg></li><li class="off"><svg><use href="#t-fillet"/></svg></li><li class="off"><svg><use href="#t-fillet"/></svg></li><li class="off"><svg><use href="#t-extrude"/></svg></li><li class="off"><svg><use href="#t-new"/></svg></li><li class="off"><svg><use href="#t-derive"/></svg></li><li class="off"><svg><use href="#t-derive"/></svg></li><li class="off"><svg><use href="#t-sketch"/></svg></li><li class="off"><svg><use href="#t-sketch"/></svg></li><li class="off"><svg><use href="#t-combine"/></svg></li>
      <li class="off"><svg><use href="#t-fillet"/></svg></li><li class="off"><svg><use href="#t-fillet"/></svg></li><li class="off"><svg><use href="#t-fillet"/></svg></li><li class="off"><svg><use href="#t-fillet"/></svg></li><li class="off"><svg><use href="#t-image"/></svg></li><li class="off"><svg><use href="#t-sketch"/></svg></li><li class="off"><svg><use href="#t-revolve"/></svg></li><li class="off"><svg><use href="#t-fillet"/></svg></li><li class="off"><svg><use href="#t-shell"/></svg></li><li class="off"><svg><use href="#t-fillet"/></svg></li>
    </ol>
    <div class="rail"><i></i><i></i><i></i></div>
  </div>
  <button class="gear" aria-label="Timeline settings"><svg width="30" height="30" viewBox="0 0 30 30"><path fill="#666" fill-rule="evenodd" d="M13 0h4l1 5 3 1 4-3 3 3-3 4 1 3 4 1v4l-4 1-1 3 3 4-3 3-4-3-3 1-1 3h-4l-1-3-3-1-4 3-3-3 3-4-1-3-4-1v-4l4-1 1-3-3-4 3-3 4 3 3-1zM15 10a5 5 0 1 0 .1 0z"/></svg></button>
</footer>
<div class="float-window" aria-hidden="true"></div>
</body>
</html>
```
FILE: styles.css
```css
* { box-sizing: border-box; }
body {
  margin: 0;
  min-height: 100vh;
  display: flex;
  flex-direction: column;
  overflow: hidden;
  position: relative;
  background: #f1f1f1;
  color: #333;
  font-family: "Noto Sans", "Open Sans", sans-serif;
  font-size: 21px;
  line-height: 28px;
}
button { margin: 0; padding: 0; border: 0; background: none; font: inherit; color: inherit; white-space: nowrap; }
svg { display: block; flex: none; }
h2, h3 { margin: 0; font: inherit; }
ul, ol { list-style: none; margin: 0; padding: 0; }
.defs { position: absolute; width: 0; height: 0; }
.icon-btn { display: flex; align-items: center; gap: 10px; }
.c-dark { color: #636363; }
.c-mid { color: #999; }

/* Top bar */
.topbar { display: flex; height: 60px; background: #ccc; }
.quick { display: flex; align-items: center; gap: 36px; padding: 0 14px 0 17px; }
.history { display: flex; gap: 23px; }
.docs { flex: 1; min-width: 0; display: flex; gap: 8px; padding-top: 11px; }
.doc {
  flex: 1;
  min-width: 0;
  display: flex;
  align-items: center;
  padding: 0 12px 2px 10px;
  border-radius: 8px 8px 0 0;
  background: #bababa;
  color: #707070;
  font-size: 23px;
}
.doc-small { flex: none; width: 53px; justify-content: center; padding: 0; }
.doc-small:first-child { width: 73px; padding-left: 4px; }
.doc-active { background: #f1f1f1; color: #333; }
.doc-title { flex: 1; min-width: 0; display: flex; align-items: center; justify-content: center; gap: 10px; }
.close { width: 20px; display: flex; justify-content: center; }
.account { display: flex; align-items: center; gap: 32px; padding: 0 24px 0 22px; }
.jobs { gap: 7px; }
.bell { margin-left: 17px; }
.avatar { margin-left: 8px; }

/* Ribbon */
.ribbon { position: relative; z-index: 1; display: flex; height: 155px; border-bottom: 2px solid #ccc; box-shadow: 0 4px 0 #f4f4f4; }
.workspace {
  flex: none;
  width: 206px;
  height: 114px;
  margin: 20px 17px 0 22px;
  padding-bottom: 3px;
  display: flex;
  align-items: center;
  justify-content: center;
  gap: 12px;
  border: 2px solid #ccc;
  border-radius: 8px;
  font-size: 20px;
  font-weight: 700;
}
.ribbon-main { flex: 1; min-width: 0; }
.modes { display: flex; gap: 40px; height: 44px; padding-left: 12px; }
.modes button { padding: 0 23px 3px; }
.modes .current { padding-bottom: 0; border-bottom: 5px solid #0696d7; background: #cdeaf6; color: #0696d7; font-weight: 700; }
.groups { display: flex; height: 109px; }
.group { position: relative; display: flex; flex-direction: column; align-items: center; padding: 0 9px 0 10px; }
.group.first { padding-left: 0; }
.group.wide { padding: 0 16px 0 15px; }
.group.select { padding: 0 34px 0 29px; }
.group::after { content: ""; position: absolute; right: 0; top: 6px; bottom: 8px; width: 2px; background: #ccc; }
.group.select::after, .group.finish::after { display: none; }
.group.finish { width: 203px; padding: 0; background: #cdeaf6; }
.tools { display: flex; height: 72px; align-items: center; }
.tools button { width: 81px; display: flex; justify-content: center; }
.tools svg { width: 60px; height: 60px; overflow: visible; }
.tools .picked svg { width: 72px; height: 72px; }
.label { display: flex; align-items: center; gap: 4px; height: 35px; margin-right: 4px; }
.first .label { margin-right: 14px; }
.select .label, .finish .label { margin-right: 0; }
.svg-badge { font: 700 13px "Liberation Sans", sans-serif; fill: #fff; }

/* Stage */
.stage { position: relative; flex: 1; display: grid; grid-template-columns: 561px 1fr 469px; padding: 0 8px 0 7px; min-height: 0; }
.sketch { position: absolute; inset: 0; width: 100%; height: 100%; }
.ruler text { font: 27px "Noto Sans", sans-serif; fill: #444; }
.dims text { font: 28px "Liberation Sans", Arial, sans-serif; fill: #000; }
.left, .right, .navbar { position: relative; grid-row: 1; }
.left { grid-column: 1; display: flex; flex-direction: column; justify-content: space-between; padding: 12px 0 9px; }
.panel-head {
  display: flex;
  align-items: center;
  gap: 19px;
  height: 46px;
  padding: 0 20px 0 8px;
  border: 2px solid #ccc;
  border-left-color: #ddd;
  background: #f1f1f1;
  color: #636363;
  font-size: 20px;
}
.panel-head h2, .palette-head h2 { flex: 1; }
.comments { padding-left: 46px; border-top-color: #f1f1f1; }
.tree-wrap { display: flex; padding: 10px 0 0 8px; }
.scroll { width: 11px; margin: 4px 0 6px; display: flex; align-items: flex-end; background: #c8cacb; }
.thumb { width: 100%; height: 143px; border: 1px solid #777; border-radius: 6px; background: #9a9b9c; }
.tree { flex: 1; padding-left: 51px; }
.tree li { display: flex; align-items: center; height: 45px; }
.tree li:first-child { height: 38px; margin-bottom: 4px; }
.tree li:first-child + li { height: 44px; }
.tree .child { padding-left: 34px; }
.twist { width: 12px; height: 18px; margin-right: 20px; background: #222; clip-path: polygon(0 0, 30% 0, 100% 50%, 30% 100%, 0 100%, 0 8%, 14% 10%, 14% 90%, 28% 90%, 82% 50%, 28% 10%, 0 10%); }
.twist.open { height: 14px; clip-path: polygon(100% 0, 100% 100%, 0 100%, 0 88%); }
.node { display: flex; align-items: center; height: 38px; padding: 0 20px 0 6px; background: #f1f1f1; white-space: nowrap; }
.eye { width: 29px; height: 26px; margin-right: 12px; }
.kind { width: 46px; height: 38px; padding: 5px 11px 5px 5px; margin-right: 15px; }
.kind.hot { background: #d9d9d9; }
.active-part { display: flex; align-items: center; height: 30px; padding-right: 20px; margin-right: 8px; background: #979797; color: #fff; font-weight: 700; }
.active-part .kind { height: 36px; }
.node input {
  appearance: none;
  width: 25px;
  height: 25px;
  margin: 0 -6px 0 0;
  border: 2px solid #444;
  border-radius: 50%;
  background: radial-gradient(circle, #222 0 5px, #dfe3ec 6px, #c3c9d6 100%);
}
.navbar {
  grid-column: 1 / -1;
  justify-self: center;
  align-self: end;
  display: flex;
  gap: 17px;
  height: 44px;
  margin-bottom: 12px;
  padding: 0 14px 0 5px;
  align-items: center;
  background: #efefef;
}
.navbar button { display: flex; align-items: center; gap: 5px; }
.navbar button > svg { width: 32px; height: 30px; }
.navbar button > .dd { width: 12px; height: 10px; margin-right: -7px; }

/* Right side */
.right { grid-column: 3; display: flex; flex-direction: column; padding-top: 15px; }
.cube { width: 172px; height: 183px; align-self: flex-end; margin-bottom: 15px; overflow: visible; }
.cube text { font-family: "Noto Sans", sans-serif; text-anchor: middle; }
.cube-face { font-size: 19px; font-weight: 700; fill: #8f9499; }
.cube-z { font-size: 25px; fill: #7a7af5; }
.cube-x { font-size: 24px; fill: #f57a7a; }
.palette { border: 2px solid #c6c6c6; background: #f1f1f1; }
.palette-head { display: flex; align-items: center; gap: 7px; height: 44px; padding: 0 7px 0 21px; border-bottom: 2px solid #c6c6c6; color: #636363; }
.flip { transform: scaleX(-1); }
.palette-body { padding: 0 0 3px 23px; }
.palette h3 { display: flex; align-items: center; gap: 13px; height: 59px; margin-left: -6px; font-weight: 700; }
.opt { display: grid; grid-template-columns: 284px 1fr; align-items: center; height: 58px; justify-items: start; }
.opt-icons { display: flex; gap: 22px; margin-left: -3px; }
.opt input { appearance: none; width: 24px; height: 24px; margin: 0; border: 2px solid #333; border-radius: 4px; background: linear-gradient(#f4f4f4, #c4c4c4); }
.opt input:checked { background: linear-gradient(#b5b5b5, #f2f2f2); }
.opt input:checked::before { content: ""; display: block; width: 20px; height: 20px; background: #111; clip-path: polygon(10% 55%, 22% 45%, 38% 66%, 78% 8%, 90% 14%, 42% 92%, 34% 92%); }
.palette-foot { display: flex; justify-content: flex-end; padding: 14px 21px 14px 0; border-top: 2px solid #c6c6c6; }
.finish-btn { height: 38px; padding: 0 6px; border: 2px solid #b0b0b0; background: #e9e9e9; color: #666; font-size: 23px; }

/* Timeline */
.timeline { position: relative; display: flex; height: 94px; border-top: 5px solid #c9c9c9; background: #f1f1f1; overflow: hidden; }
.behind { position: absolute; left: 0; top: 0; width: 49px; height: 14px; border-radius: 0 8px 8px 0; background: #c2c2c2; }
.play { flex: none; display: flex; align-items: center; padding: 14px 25px 0 7px; }
.play button { width: 47px; display: flex; justify-content: center; }
.play svg { width: 24px; height: 26px; fill: #5c5c5c; }
.track { flex: none; padding-top: 28px; }
.track ol { display: flex; }
.track li { position: relative; width: 45px; display: flex; flex-direction: column; align-items: center; }
.track li svg { width: 30px; height: 32px; }
.track li::after { content: ""; width: 4px; height: 10px; margin-top: 4px; background: #c9c9c9; }
.off svg { opacity: .25; }
.mark::before { content: ""; position: absolute; left: -13px; top: -11px; width: 24px; height: 60px; background: #5c5c5c; clip-path: polygon(0 0, 100% 0, 100% 8px, 14px 18px, 14px 100%, 10px 100%, 10px 18px, 0 8px); }
.rail { display: flex; gap: 4px; margin: 0 -8px 0 8px; }
.rail i { height: 4px; width: 8px; background: #c9c9c9; }
.rail i:first-child { flex: 1; }
.rail i:last-child { width: 5px; }
.gear { margin-left: auto; padding: 12px 26px 0 0; }
.float-window {
  position: absolute;
  left: 0;
  bottom: 0;
  width: 30px;
  height: 137px;
  border: 1px solid #bbb;
  border-width: 1px 1px 0 0;
  border-radius: 0 14px 0 0;
  background: linear-gradient(#e8e7e3 0 52px, #ccc 52px 54px, #eeede9 54px);
  box-shadow: 0 4px 40px rgba(0, 0, 0, .18);
}
```
